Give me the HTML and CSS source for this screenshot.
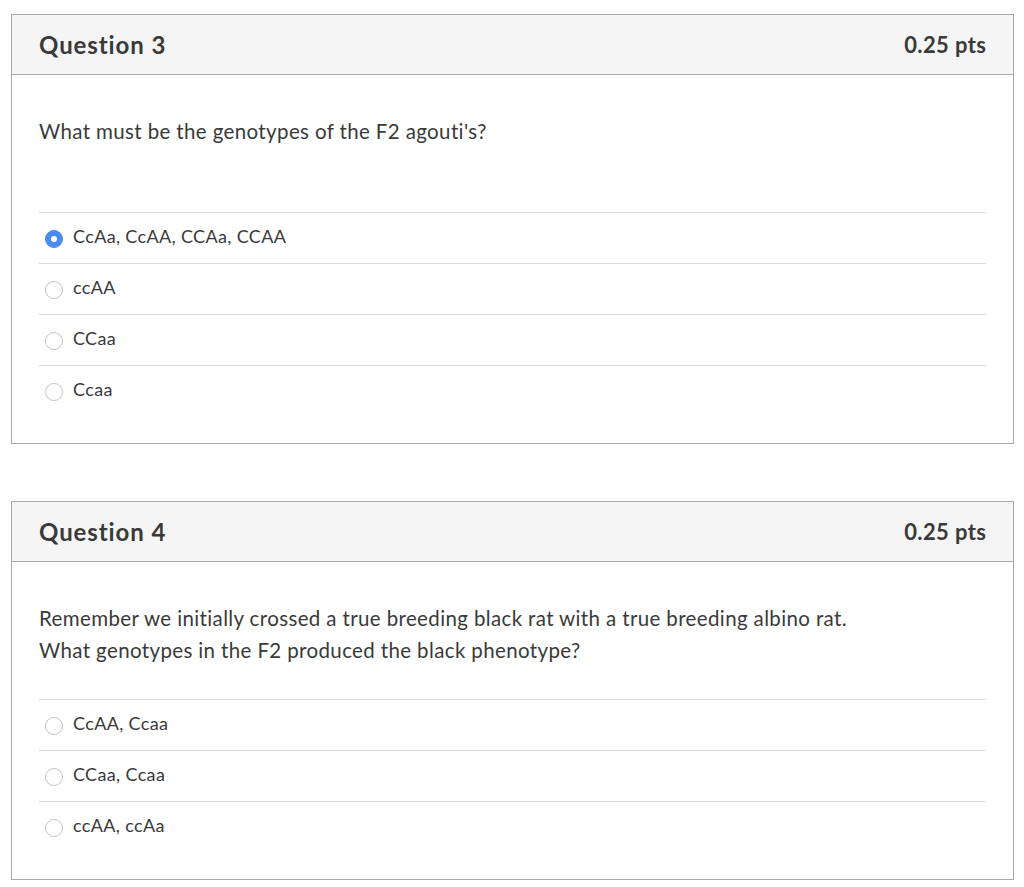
FILE: index.html
```html
<!DOCTYPE html>
<html>
<head>
<meta charset="utf-8">
<link rel="stylesheet" href="styles.css">
</head>
<body>
<div class="page">
  <section class="card">
    <header class="card-head">
      <h2 class="q-title">Question 3</h2>
      <span class="q-pts">0.25 pts</span>
    </header>
    <div class="card-body">
      <div class="q-text q-text--spaced">
        <p>What must be the genotypes of the F2 agouti's?</p>
      </div>
      <ul class="answers">
        <li class="answer"><span class="radio radio--on"></span><span class="label">CcAa, CcAA, CCAa, CCAA</span></li>
        <li class="answer"><span class="radio"></span><span class="label">ccAA</span></li>
        <li class="answer"><span class="radio"></span><span class="label">CCaa</span></li>
        <li class="answer"><span class="radio"></span><span class="label">Ccaa</span></li>
      </ul>
    </div>
  </section>

  <section class="card">
    <header class="card-head">
      <h2 class="q-title">Question 4</h2>
      <span class="q-pts">0.25 pts</span>
    </header>
    <div class="card-body">
      <div class="q-text">
        <p>Remember we initially crossed a true breeding black rat with a true breeding albino rat.<br>What genotypes in the F2 produced the black phenotype?</p>
      </div>
      <ul class="answers">
        <li class="answer"><span class="radio"></span><span class="label">CcAA, Ccaa</span></li>
        <li class="answer"><span class="radio"></span><span class="label">CCaa, Ccaa</span></li>
        <li class="answer"><span class="radio"></span><span class="label">ccAA, ccAa</span></li>
      </ul>
    </div>
  </section>
</div>
</body>
</html>
```

FILE: styles.css
```css
* { box-sizing: border-box; }

html, body {
  margin: 0;
  padding: 0;
  background: #ffffff;
}

body {
  font-family: Lato, "Open Sans", "Liberation Sans", sans-serif;
  color: #3a3a3a;
}

.page {
  padding: 14px 10px 0 11px;
  display: flex;
  flex-direction: column;
  gap: 57px;
}

.card {
  border: 1px solid #a9a9a9;
  width: 1003px;
  background: #fff;
}

.card-head {
  height: 60px;
  background: #f5f5f5;
  border-bottom: 1px solid #a9a9a9;
  display: flex;
  align-items: center;
  justify-content: space-between;
  padding: 0 27px 0 27px;
}

.q-title {
  margin: 0;
  font-size: 24px;
  font-weight: 700;
  color: #3a3a3a;
  letter-spacing: 0.9px;
}

.q-pts {
  font-size: 22px;
  font-weight: 700;
  color: #3a3a3a;
  letter-spacing: 0.4px;
  margin-right: -0.4px;
}

.card-body {
  padding: 40px 27px 27px 27px;
}

.q-text p {
  margin: 0;
  font-size: 20.5px;
  line-height: 32px;
  letter-spacing: 0.37px;
}

.q-text {
  padding-bottom: 33px;
}

.q-text--spaced {
  padding-bottom: 65px;
}

.answers {
  list-style: none;
  margin: 0;
  padding: 0;
}

.answer {
  height: 51px;
  border-top: 1px solid #dcdcdc;
  display: flex;
  align-items: center;
  padding-left: 6px;
  gap: 10px;
}

.label {
  font-size: 18px;
  letter-spacing: 0.35px;
  color: #3a3a3a;
  margin-top: -4px;
}

.radio {
  width: 18px;
  height: 18px;
  border-radius: 50%;
  border: 1px solid #c4c4c4;
  background: #fff;
  flex: none;
  margin-top: 1px;
  display: flex;
  align-items: center;
  justify-content: center;
}

.radio--on {
  background: #4b8af1;
  border-color: #4b8af1;
}

.radio--on::after {
  content: "";
  width: 6px;
  height: 6px;
  border-radius: 50%;
  background: #fff;
}
```
